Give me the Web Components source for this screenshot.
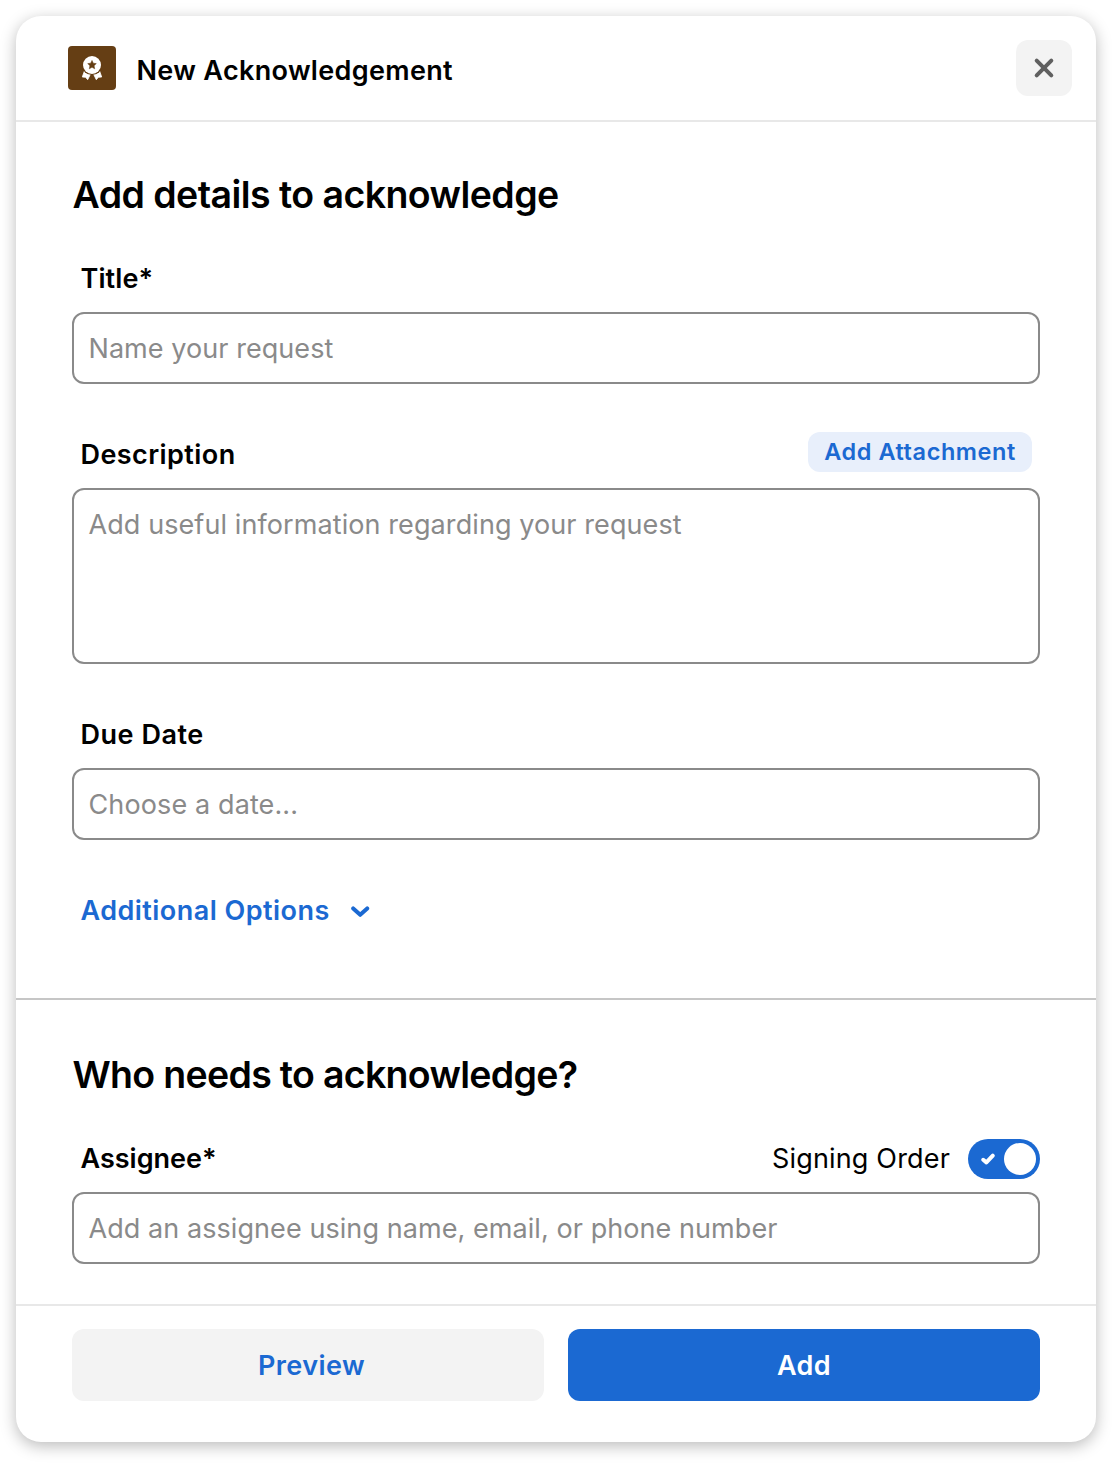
<!DOCTYPE html>
<html lang="en">
<head>
<meta charset="utf-8">
<title>New Acknowledgement</title>
<style>
html, body { margin: 0; }
body {
  --blue: #1b69d2;
  --grey: #8a8a8a;
  box-sizing: border-box;
  width: 1112px;
  height: 1464px;
  padding: 16px 16px 22px;
  overflow: hidden;
  background: #fff;
  color: #000;
  font: 400 27px/36px Inter, "Liberation Sans", sans-serif;
}
.tight-1 { letter-spacing: -0.56px; }
.tight-2 { letter-spacing: -0.69px; }
</style>
</head>
<body>
<ack-dialog>
  <ack-header slot="header">New Acknowledgement</ack-header>
  <ack-section>
    <span slot="heading" class="tight-1">Add details to acknowledge</span>
    <ack-field placeholder="Name your request" style="--label-spacing:.1px;--text-spacing:.06px">Title*</ack-field>
    <ack-field multiline placeholder="Add useful information regarding your request" style="--label-spacing:.42px;--text-spacing:.09px">Description
      <ack-chip slot="aside">Add Attachment</ack-chip>
    </ack-field>
    <ack-field placeholder="Choose a date..." style="--label-spacing:.52px;--text-spacing:.12px">Due Date</ack-field>
    <ack-disclosure>Additional Options</ack-disclosure>
  </ack-section>
  <ack-section class="people">
    <span slot="heading" class="tight-2">Who needs to acknowledge?</span>
    <ack-field placeholder="Add an assignee using name, email, or phone number" style="--label-spacing:0;--text-spacing:.07px">Assignee*
      <ack-toggle slot="aside">Signing Order</ack-toggle>
    </ack-field>
  </ack-section>
  <ack-button slot="footer" style="padding-left:7px">Preview</ack-button>
  <ack-button slot="footer" primary>Add</ack-button>
</ack-dialog>

<script>
const define = (name, html) => customElements.define(name, class extends HTMLElement {
  constructor() {
    super();
    this.attachShadow({ mode: 'open' }).innerHTML = html;
  }
  connectedCallback() {
    const text = this.shadowRoot.querySelector('.placeholder');
    if (text) text.textContent = this.getAttribute('placeholder');
  }
});

define('ack-dialog', `
<style>
  :host { display: flex; flex-direction: column; box-sizing: border-box; height: 1426px;
    border-radius: 25px; background: #fff; box-shadow: 0 4px 16px rgba(0,0,0,.27); }
  main { flex: 1; }
  footer { display: grid; grid-template-columns: 1fr 1fr; gap: 24px; padding: 23px 56px 41px; border-top: 2px solid #e8e8e8; }
</style>
<slot name="header"></slot>
<main><slot></slot></main>
<footer><slot name="footer"></slot></footer>`);

define('ack-header', `
<style>
  :host { display: flex; flex: none; align-items: flex-start; box-sizing: border-box; height: 106px;
    padding: 24px 24px 0 52px; border-bottom: 2px solid #e8e8e8; }
  .badge { width: 48px; height: 44px; margin-top: 6px; }
  h1 { flex: 1; margin: 13px 0 0 20.5px; font: inherit; font-weight: 560; letter-spacing: .33px; }
  button { display: block; width: 56px; height: 56px; padding: 0; border: 0; border-radius: 12px; background: #f3f3f3; }
  button svg { display: block; }
</style>
<svg class="badge" viewBox="0 0 48 44">
  <rect width="48" height="44" rx="4" fill="#653e14"/>
  <path fill="#fff" stroke="#fff" stroke-width=".8" stroke-linejoin="round" d="M16.6 24.5 14.3 31 17.6 31.3 19.7 33.7 23 27ZM31.4 24.5 33.7 31 30.4 31.3 28.3 33.7 25 27Z"/>
  <circle cx="24" cy="19" r="10.1" fill="#653e14"/>
  <circle cx="24" cy="19" r="9" fill="#fff"/>
  <path fill="#653e14" stroke="#653e14" stroke-width=".5" stroke-linejoin="round" d="M24 14.4 25.3 17.2 28.3 17.6 26.1 19.7 26.7 22.8 24 21.3 21.3 22.8 21.9 19.7 19.7 17.6 22.7 17.2Z"/>
</svg>
<h1><slot></slot></h1>
<button aria-label="Close"><svg width="56" height="56" fill="none" stroke="#606060" stroke-width="4" stroke-linecap="round"><path d="M20.7 20.7 35.3 35.3M35.3 20.7 20.7 35.3"/></svg></button>`);

define('ack-section', `
<style>
  :host { display: block; padding: 51px 56px 70px; }
  :host(.people) { padding: 53px 56px 40px; border-top: 2px solid #c6c6c6; }
  h2 { margin: 0 0 39px; font-size: 37.5px; line-height: 44px; font-weight: 600; padding-left: .5px; }
  .fields { display: flex; flex-direction: column; gap: 48px; }
</style>
<h2><slot name="heading"></slot></h2>
<div class="fields"><slot></slot></div>`);

define('ack-field', `
<style>
  :host { display: block; }
  .head { display: flex; justify-content: space-between; align-items: flex-start; height: 40px; margin-bottom: 16px; }
  .label { padding: 5px 0 0 8.5px; font-weight: 600; letter-spacing: var(--label-spacing); }
  .box { box-sizing: border-box; height: 72px; padding: 17px 14px 0 14.5px; border: 2px solid var(--grey);
    border-radius: 12px; color: var(--grey); letter-spacing: var(--text-spacing); }
  :host([multiline]) .box { height: 176px; }
</style>
<div class="head"><span class="label"><slot></slot></span><slot name="aside"></slot></div>
<div class="box" role="textbox"><span class="placeholder"></span></div>`);

define('ack-chip', `
<style>
  :host { display: block; box-sizing: border-box; width: 224px; height: 40px; margin-right: 8px; border-radius: 12px;
    background: #e8effb; color: var(--blue); text-align: center; font-size: 23.5px; line-height: 40px;
    font-weight: 560; letter-spacing: .56px; white-space: nowrap; }
</style><slot></slot>`);

define('ack-disclosure', `
<style>
  :host { display: flex; align-items: center; box-sizing: border-box; height: 40px; padding: 5px 0 0 8.5px; color: var(--blue);
    font-weight: 560; letter-spacing: .46px; }
  svg { margin-left: 20px; }
</style><slot></slot>
<svg width="20" height="14" fill="none" stroke="currentColor" stroke-width="4" stroke-linecap="round" stroke-linejoin="round"><path d="M3.2 4.4 10.2 10.8 17.2 4.4"/></svg>`);

define('ack-toggle', `
<style>
  :host { display: flex; align-items: flex-start; }
  .text { padding: 5px 18px 0 0; letter-spacing: .17px; }
  .track { display: flex; align-items: center; box-sizing: border-box; width: 72px; height: 40px; margin-top: 3px;
    padding: 0 4px 0 12px; border-radius: 20px; background: var(--blue); justify-content: space-between; }
  .knob { width: 32px; height: 32px; border-radius: 50%; background: #fff; }
</style>
<span class="text"><slot></slot></span>
<span class="track" role="switch" aria-checked="true">
  <svg width="16" height="16" fill="none" stroke="#fff" stroke-width="4" stroke-linecap="round" stroke-linejoin="round"><path d="M3.2 8.8 6.4 11.4 12.8 4.6"/></svg>
  <span class="knob"></span>
</span>`);

define('ack-button', `
<style>
  :host { display: block; box-sizing: border-box; height: 72px; border-radius: 12px; background: #f3f3f3; color: var(--blue);
    text-align: center; font-weight: 560; line-height: 74px; letter-spacing: .4px; }
  :host([primary]) { background: var(--blue); color: #fff; }
</style><slot></slot>`);
</script>
</body>
</html>
